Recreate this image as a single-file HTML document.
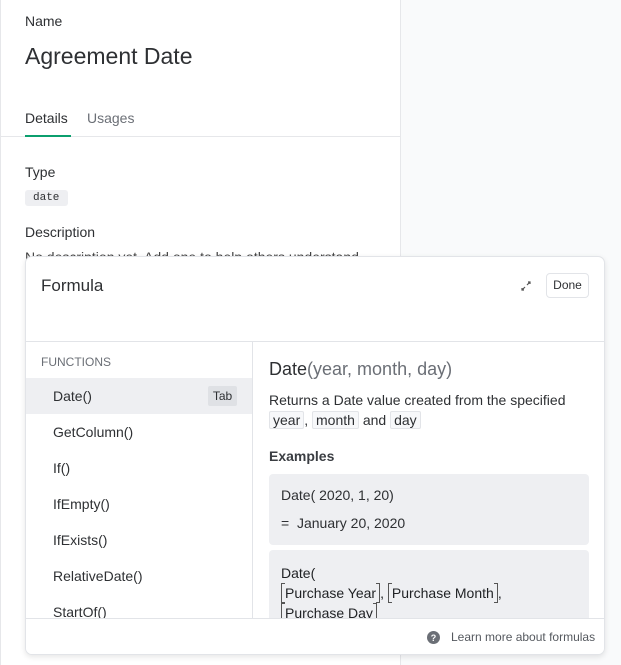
<!DOCTYPE html><html><head><style>
*{margin:0;padding:0;box-sizing:border-box}
body{width:621px;height:665px;overflow:hidden;font-family:"Liberation Sans",sans-serif;color:#2e3033;background:#f9fafb;position:relative}
.a{position:absolute;white-space:nowrap}
.chip{border:1px solid #e2e4e8;background:#f7f8fa;padding:0 3px;border-radius:2px}
.br{display:inline-block;border:1.5px solid #555;border-width:1.5px 0 1.5px 1.5px;width:4px;height:20px;vertical-align:-5px}
.br2{border-width:1.5px 1.5px 1.5px 0}
</style></head><body>
<div class="a" style="left:0;top:0;width:401px;height:665px;background:#fff;border-left:1px solid #e6e7ea;border-right:1px solid #e6e7ea"></div>
<div class="a" style="left:25px;top:13px;font-size:14px">Name</div>
<div class="a" style="left:25px;top:43px;font-size:23px">Agreement Date</div>
<div class="a" style="left:25px;top:110px;font-size:14px">Details</div>
<div class="a" style="left:87px;top:110px;font-size:14px;color:#6b6f76">Usages</div>
<div class="a" style="left:1px;top:136px;width:399px;height:1px;background:#e6e7ea"></div>
<div class="a" style="left:25px;top:135px;width:46px;height:2px;background:#0b9f6e"></div>
<div class="a" style="left:25px;top:164px;font-size:14px">Type</div>
<div class="a" style="left:25px;top:190px;height:16px;width:43px;background:#eeeff2;border-radius:3px;font:11px 'Liberation Mono',monospace;padding:2px 0 0 8px">date</div>
<div class="a" style="left:25px;top:224px;font-size:14px">Description</div>
<div class="a" style="left:25px;top:249px;font-size:14px;color:#444">No description yet. Add one to help others understand</div>
<div class="a" style="left:25px;top:256px;width:580px;height:399px;background:#fff;border:1px solid #e2e4e8;border-radius:7px;box-shadow:0 2px 6px rgba(0,0,0,.1);overflow:hidden">
 <div class="a" style="left:15px;top:19px;font-size:17px">Formula</div>
 <svg class="a" style="left:493px;top:22px" width="14" height="14" viewBox="0 0 14 14" fill="none" stroke="#555" stroke-width="1.2"><path d="M8 6L11 3M9 3h2v2M6 8L3 11M3 9v2h2"/></svg>
 <div class="a" style="left:520px;top:16px;width:43px;height:25px;border:1px solid #e2e4e8;border-radius:4px;font-size:12px;text-align:center;line-height:23px">Done</div>
 <div class="a" style="left:0;top:84px;width:580px;height:1px;background:#e2e4e8"></div>
 <div class="a" style="left:226px;top:85px;width:1px;height:277px;background:#e2e4e8"></div>
 <div class="a" style="left:15px;top:98px;font-size:12px;color:#6b6f76">FUNCTIONS</div>
 <div class="a" style="left:0;top:121px;width:226px;height:36px;background:#eeeff2"></div>
 <div class="a" style="left:182px;top:129px;width:29px;height:20px;background:#dfe1e5;border-radius:2px;font-size:12px;text-align:center;line-height:20px">Tab</div>
 <div class="a" style="left:27px;top:131px;font-size:14px">Date()</div>
 <div class="a" style="left:27px;top:167px;font-size:14px">GetColumn()</div>
 <div class="a" style="left:27px;top:203px;font-size:14px">If()</div>
 <div class="a" style="left:27px;top:239px;font-size:14px">IfEmpty()</div>
 <div class="a" style="left:27px;top:275px;font-size:14px">IfExists()</div>
 <div class="a" style="left:27px;top:311px;font-size:14px">RelativeDate()</div>
 <div class="a" style="left:27px;top:347px;font-size:14px">StartOf()</div>
 <div class="a" style="left:243px;top:102px;font-size:18px">Date<span style="color:#6b6f76">(year, month, day)</span></div>
 <div class="a" style="left:243px;top:133px;font-size:14px;line-height:20px">Returns a Date value created from the specified<br><span class="chip">year</span>, <span class="chip">month</span> and <span class="chip">day</span></div>
 <div class="a" style="left:243px;top:191px;font-size:14px;font-weight:bold;color:#3a3d42">Examples</div>
 <div class="a" style="left:243px;top:217px;width:320px;height:71px;background:#eeeff2;border-radius:4px;font-size:14px;padding:7px 0 0 12px;line-height:28px">Date( 2020, 1, 20)<br>= &nbsp;January 20, 2020</div>
 <div class="a" style="left:243px;top:293px;width:320px;height:80px;background:#eeeff2;border-radius:4px;font-size:14px;padding:13px 0 0 12px;line-height:20px;color:#1f2124">Date(<br><span class="br"></span>Purchase Year<span class="br br2"></span>, <span class="br"></span>Purchase Month<span class="br br2"></span>,<br><span class="br"></span>Purchase Day<span class="br br2"></span></div>
 <div class="a" style="left:0;top:361px;width:580px;height:38px;background:#fff;border-top:1px solid #e2e4e8"></div>
 <svg class="a" style="left:401px;top:374px" width="13" height="13" viewBox="0 0 13 13"><circle cx="6.5" cy="6.5" r="6.5" fill="#6b6f76"/><text x="6.5" y="10" font-size="9" font-weight="bold" fill="#fff" text-anchor="middle" font-family="Liberation Sans">?</text></svg>
 <div class="a" style="left:425px;top:373px;font-size:12px;color:#55595f">Learn more about formulas</div>
</div>
</body></html>
